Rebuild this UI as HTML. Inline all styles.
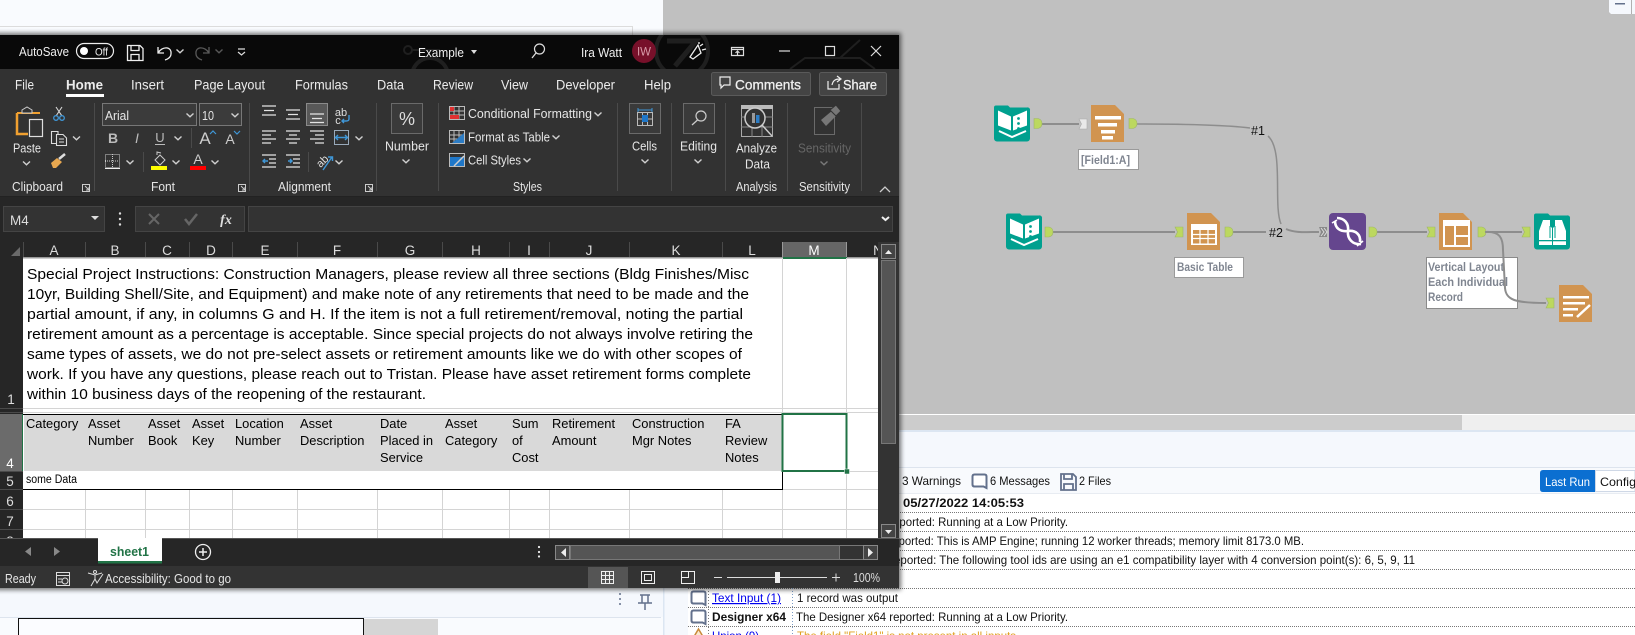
<!DOCTYPE html>
<html lang="en"><head><meta charset="utf-8"><title>Excel and Designer</title>
<style>
html,body{margin:0;padding:0;background:#fff;width:1635px;height:635px;overflow:hidden}
svg{display:block}
text{font-family:"Liberation Sans",Arial,sans-serif;white-space:pre}
.t{font-size:14px;fill:#ececec}
.r{font-size:13px;fill:#e6e6e6}
.m{text-anchor:middle}
.c{font-size:14.67px;fill:#000}
.h{font-size:12.9px;fill:#000}
.cl{font-size:13.5px;fill:#ddd;text-anchor:middle}
.rn{font-size:13.5px;fill:#ddd;text-anchor:middle}
.lg{font-size:12px;fill:#111}
.cm{font-size:11.5px;font-weight:bold;fill:#7f8590}
.ic{fill:none;stroke:#ddd;stroke-width:1.2}
.bl{fill:none;stroke:#3f97d8;stroke-width:1.4}
.wl{fill:none;stroke:#e4e4e4;stroke-width:1.2}
.ws{fill:#fff}
</style></head><body>
<svg xmlns="http://www.w3.org/2000/svg" width="1635" height="635" viewBox="0 0 1635 635">
<defs>
<clipPath id="tb"><rect x="0" y="35" width="899" height="34"/></clipPath>
<polyline id="ch" points="-3.5,-1.5 0,1.8 3.5,-1.5" fill="none" stroke="#d0d0d0" stroke-width="1.4"/>
<filter id="b" x="-5%" y="-5%" width="110%" height="110%"><feGaussianBlur stdDeviation="2.5"/></filter>
<path id="teal" d="M2 0H14L16 2H33A2.500 2.500 0 0 1 36 5V33A3 3 0 0 1 33 36H3A3 3 0 0 1 0 33V2A2 2 0 0 1 2 0Z" fill="#00a08f"/>
<g id="book"><use href="#teal"/>
<path d="M4 5L17 11V25L4 20Z M19 11L33 5V20L19 25Z" fill="#fff"/>
<circle cx="24.500" cy="13" r="1.400" fill="#00a08f"/><circle cx="24.500" cy="18" r="1.400" fill="#00a08f"/><circle cx="24.500" cy="23" r="1.400" fill="#00a08f"/>
<path d="M5 25.500L18 31.500L32 25.500" fill="none" stroke="#fff" stroke-width="2"/></g>
<path id="or" d="M0 0H24L33 9V37H0Z" fill="#d19450"/>
<path id="out" d="M0 0H4Q8 1 8 5T4 10H0Z" fill="#bcd85f" stroke="#9fb56a" stroke-width=".6"/>
<path id="inp" d="M0 0H8V10H0L2.500 5Z" fill="#bcd85f" stroke="#9fb56a" stroke-width=".6"/>
<path id="msg" d="M3.500 1.500H13.500Q15.500 1.500 15.500 3.500V15L12.500 13.500H3.500Q1.500 13.500 1.500 11.500V3.500Q1.500 1.500 3.500 1.500Z" fill="#fff" stroke="#63718c" stroke-width="2"/>
</defs>

<!-- background -->
<rect width="1635" height="635" fill="#fff"/>
<rect width="663" height="635" fill="#f9fbfe"/>
<path d="M0 26.500H632.500V40" fill="none" stroke="#dcdcdc"/>
<rect x="663" width="972" height="414" fill="#c0c0c0"/>
<path d="M1609 0H1631V14H1611L1609 12Z" fill="#f5f8fd"/>
<rect x="1615" y="3" width="10" height="1.500" fill="#63718c"/>
<rect x="1631" width="1" height="14" fill="#b0b0b0"/><rect x="1632" width="3" height="14" fill="#f5f8fd"/>

<!-- canvas scrollbar and results panel -->
<rect x="663" y="415" width="799" height="15" fill="#cccccc"/>
<rect x="1462" y="415" width="173" height="15" fill="#efefef"/>
<rect x="663" y="430" width="972" height="2" fill="#dce6f2"/>
<rect x="663" y="432" width="972" height="35" fill="#f5f8fd"/>
<rect x="663" y="467" width="972" height="1" fill="#dde4ee"/>
<rect x="663" y="468" width="972" height="25" fill="#f8fafd"/>
<rect x="663" y="493" width="972" height="1" fill="#e8ecf2"/>
<rect x="663" y="494" width="25" height="141" fill="#f5f8fd"/>
<rect x="663" y="430" width="1.500" height="205" fill="#dce6f2"/>

<text class="lg" x="902" y="485" textLength="59" lengthAdjust="spacingAndGlyphs">3 Warnings</text>
<use href="#msg" x="971" y="473"/>
<text class="lg" x="990" y="485" textLength="60" lengthAdjust="spacingAndGlyphs">6 Messages</text>
<g fill="none" stroke="#63718c" stroke-width="1.800"><path d="M1061 474H1073L1076 477V490H1061Z"/><path d="M1064 474V479H1072V474M1064 490V484H1073V490"/></g>
<text class="lg" x="1079" y="485" textLength="32" lengthAdjust="spacingAndGlyphs">2 Files</text>
<path d="M1543 470H1595V492H1543Q1540 492 1540 489V473Q1540 470 1543 470Z" fill="#0b6fd1"/>
<text class="lg" x="1545" y="486" textLength="45" lengthAdjust="spacingAndGlyphs" style="fill:#fff">Last Run</text>
<path d="M1595.500 470.500H1635V491.500H1595.500Z" fill="#fff" stroke="#cfd8e6"/>
<text class="lg" x="1600" y="486" textLength="36" lengthAdjust="spacingAndGlyphs">Config</text>

<g stroke="#777" stroke-dasharray="1 1" stroke-width="1">
<path d="M688 512.500H1635M688 531.500H1635M688 550.500H1635M688 569.500H1635M688 588.500H1635M688 607.500H1635M688 626.500H1635"/></g>
<path d="M792.500 588V635" stroke="#7a9cc6" stroke-dasharray="1 2"/>
<path d="M708.500 588V635" stroke="#777" stroke-dasharray="1 2"/>
<text class="lg" x="903" y="507" textLength="121" lengthAdjust="spacingAndGlyphs" style="font-weight:bold">05/27/2022 14:05:53</text>
<text class="lg" x="796" y="526" textLength="272" lengthAdjust="spacingAndGlyphs">The Designer x64 reported: Running at a Low Priority.</text>
<text class="lg" x="796" y="545" textLength="508" lengthAdjust="spacingAndGlyphs">The Designer x64 reported: This is AMP Engine; running 12 worker threads; memory limit 8173.0 MB.</text>
<text class="lg" x="796" y="564" textLength="619" lengthAdjust="spacingAndGlyphs">The Designer x64 reported: The following tool ids are using an e1 compatibility layer with 4 conversion point(s): 6, 5, 9, 11</text>
<use href="#msg" x="690" y="590"/>
<text class="lg" x="712" y="602" textLength="69" lengthAdjust="spacingAndGlyphs" style="fill:#0000ee;text-decoration:underline">Text Input (1)</text>
<text class="lg" x="797" y="602" textLength="101" lengthAdjust="spacingAndGlyphs">1 record was output</text>
<use href="#msg" x="690" y="609"/>
<text class="lg" x="712" y="621" textLength="74" lengthAdjust="spacingAndGlyphs" style="font-weight:bold">Designer x64</text>
<text class="lg" x="796" y="621" textLength="272" lengthAdjust="spacingAndGlyphs">The Designer x64 reported: Running at a Low Priority.</text>
<path d="M698.500 629L705 640H692Z" fill="#fbe9cf" stroke="#c98a3a" stroke-width="1.500"/>
<text class="lg" x="712" y="640" textLength="47" lengthAdjust="spacingAndGlyphs" style="fill:#0000ee;text-decoration:underline">Union (9)</text>
<text class="lg" x="797" y="640" textLength="219" lengthAdjust="spacingAndGlyphs" style="fill:#e0a020">The field "Field1" is not present in all inputs</text>

<!-- left lower -->
<rect y="590" width="663" height="27" fill="#f5f8fd"/>
<rect y="617" width="661" height="1" fill="#dde4ee"/>
<rect x="18.500" y="618.500" width="345" height="20" fill="#fbfcff" stroke="#111"/>
<rect x="364" y="619" width="74" height="16" fill="#d5d5d5"/>
<circle cx="620" cy="594" r="1" fill="#63718c"/><circle cx="620" cy="599" r="1" fill="#63718c"/><circle cx="620" cy="604" r="1" fill="#63718c"/>
<path d="M640 595H650M642 595V603H648V595M638 603H652M645 603V610" fill="none" stroke="#63718c" stroke-width="1.500"/>

<!-- workflow connections -->
<g fill="none" stroke="#8d8d8d" stroke-width="2">
<path d="M1041 124H1079"/>
<path d="M1137 124C1180 124 1225 125 1250 128" stroke-width="1.500"/>
<path d="M1268 136C1284 150 1273 205 1281 224" stroke-width="1.500"/>
<path d="M1052 232H1175"/><path d="M1232 232H1266"/>
<path d="M1286 229C1295 233 1305 232 1319 232"/>
<path d="M1377 232H1427"/><path d="M1485 232H1522"/>
</g>
<text x="1258" y="135" text-anchor="middle" style="font-size:12.500px;fill:#111">#1</text>
<text x="1276" y="237" text-anchor="middle" style="font-size:12.500px;fill:#111">#2</text>

<use href="#book" x="994" y="105.500"/>
<use href="#out" x="1034" y="118.500"/>
<path d="M1079 119H1087V129H1079L1081.500 124Z" fill="#e9e9e9" stroke="#aaa" stroke-width=".6"/>
<use href="#or" x="1091" y="105"/>
<g class="ws"><rect x="1095" y="116" width="26" height="3.500"/><rect x="1098" y="123" width="19" height="3.500"/><rect x="1101" y="130" width="14" height="3.500"/><rect x="1102" y="136" width="11" height="3.500"/></g>
<use href="#out" x="1129" y="118.500"/>
<rect x="1078.500" y="149.500" width="60" height="20" fill="#fff" stroke="#9a9a9a"/>
<text class="cm" x="1081" y="164" textLength="49" lengthAdjust="spacingAndGlyphs">[Field1:A]</text>

<use href="#book" x="1006" y="213.500"/>
<use href="#out" x="1045" y="227"/>
<use href="#inp" x="1175" y="227"/>
<use href="#or" x="1187" y="213"/>
<rect x="1191" y="224" width="26" height="21" fill="#fff"/>
<rect x="1193" y="230" width="22" height="13.500" fill="#d19450"/>
<path d="M1193 234.500H1215M1193 238.500H1215M1200 230V244M1208 230V244" stroke="#fff" stroke-width="1.200"/>
<use href="#out" x="1225" y="227"/>
<rect x="1174.500" y="257.500" width="69" height="20" fill="#fff" stroke="#9a9a9a"/>
<text class="cm" x="1177" y="271" textLength="56" lengthAdjust="spacingAndGlyphs">Basic Table</text>

<path d="M1319 227H1327V237H1319L1321 232Z" fill="#888"/>
<path d="M1321 228L1324 232L1321 236M1324 228L1327 232L1324 236" fill="none" stroke="#ddd"/>
<rect x="1329" y="213" width="37" height="37" rx="4" fill="#65468e"/>
<g fill="none" stroke="#fff" stroke-width="2.600" transform="translate(1329 213)">
<path d="M8 5C15 5 20 10 19 18C18 26 24 32 32 31"/>
<path d="M6 8C6 15 11 19 19 18C27 17 32 22 31 29"/>
<path d="M3 10L8 7M28 33L34 28" stroke-width="1.600"/>
</g>
<g fill="#65468e"><circle cx="1341" cy="224" r="1.100"/><circle cx="1344" cy="227" r="1.100"/><circle cx="1353" cy="236" r="1.100"/><circle cx="1356" cy="239" r="1.100"/></g>
<use href="#out" x="1369" y="227"/>
<use href="#inp" x="1427" y="227"/>
<use href="#or" x="1439" y="213"/>
<rect x="1443" y="220" width="27" height="27" fill="#fff"/>
<rect x="1445" y="226" width="9" height="19" fill="#d19450"/><rect x="1456" y="226" width="12" height="9" fill="#d19450"/><rect x="1456" y="237" width="12" height="8" fill="#d19450"/>
<use href="#out" x="1478" y="227"/>
<use href="#inp" x="1522" y="227"/>
<use href="#teal" x="1534" y="213.500"/>
<g transform="translate(1534 213)" fill="#fff">
<path d="M9 7H16V13L18 15V32H5V18Z"/><path d="M28 7H21V13L19 15V32H32V18Z"/>
<rect x="5" y="27" width="13" height="1.300" fill="#00a08f"/><rect x="19" y="27" width="13" height="1.300" fill="#00a08f"/>
<rect x="15.500" y="13" width="1" height="12" fill="#00a08f"/><rect x="20.500" y="13" width="1" height="12" fill="#00a08f"/>
</g>

<rect x="1426.500" y="257.500" width="91" height="51" fill="#fff" stroke="#8a8a8a"/>
<text class="cm" x="1428" y="271" textLength="76" lengthAdjust="spacingAndGlyphs">Vertical Layout</text>
<text class="cm" x="1428" y="286" textLength="80" lengthAdjust="spacingAndGlyphs">Each Individual</text>
<text class="cm" x="1428" y="301" textLength="35" lengthAdjust="spacingAndGlyphs">Record</text>
<path d="M1485 232C1500 231 1503 238 1503 250L1505 288C1506 300 1515 303 1546 303" fill="none" stroke="#8d8d8d" stroke-width="2"/>
<use href="#inp" x="1546" y="298"/>
<use href="#or" x="1559" y="285"/>
<g fill="#fff"><rect x="1563" y="296" width="26" height="2.500"/><rect x="1563" y="302" width="22" height="2.500"/><rect x="1563" y="308" width="15" height="2.500"/><rect x="1563" y="314" width="10" height="2.500"/></g>
<path d="M1577 317L1590 305" stroke="#fff" stroke-width="2.500"/>

<!-- EXCEL WINDOW -->
<rect x="-5" y="33" width="906" height="557" fill="#000" opacity=".55" filter="url(#b)"/>
<rect y="35" width="899" height="553" fill="#262626"/>
<rect y="35" width="899" height="34" fill="#090909"/>
<g fill="none" stroke="#1f1f1f" stroke-width="2" clip-path="url(#tb)">
<circle cx="682" cy="51" r="26" stroke-width="4"/><path d="M667 41H696L675 66" stroke-width="5"/>
<circle cx="408" cy="50" r="4"/><circle cx="430" cy="76" r="18" stroke-width="4"/><path d="M412 50H440M790 69L805 58H860L875 69M840 58L860 40"/>
</g>
<!-- title -->
<text x="19" y="56" textLength="50" lengthAdjust="spacingAndGlyphs" style="font-size:13px;fill:#f0f0f0">AutoSave</text>
<rect x="76.500" y="43.500" width="37" height="15" rx="7.500" fill="#090909" stroke="#eee" stroke-width="1.200"/>
<circle cx="84" cy="51" r="4" fill="#fff"/>
<text x="95" y="55.500" textLength="13" lengthAdjust="spacingAndGlyphs" style="font-size:11px;fill:#eee">Off</text>
<g fill="none" stroke="#eee" stroke-width="1.300"><path d="M127.500 45.500H140L143 48.500V60.500H127.500Z"/><path d="M131 45.500V50.500H139V45.500M131 60.500V54.500H139V60.500"/>
<path d="M158 47V53H164M158 53C162 46 172 46 171 54C171 57 168 59 165 60"/></g>
<use href="#ch" x="180" y="51"/>
<g fill="none" stroke="#5a5a5a" stroke-width="1.300"><path d="M209 47V53H203M209 53C205 46 195 46 196 54C196 57 199 59 202 60"/></g>
<use href="#ch" x="219" y="51" opacity=".4"/>
<path d="M238 49H245M238 52L241.500 55L245 52" fill="none" stroke="#ddd" stroke-width="1.200"/>
<text x="418" y="57" textLength="46" lengthAdjust="spacingAndGlyphs" style="font-size:13px;fill:#f0f0f0">Example</text>
<path d="M471 50H477L474 54Z" fill="#ddd"/>
<circle cx="539.500" cy="49" r="5" fill="none" stroke="#ddd" stroke-width="1.200"/><path d="M536 53L532 58" stroke="#ddd" stroke-width="1.300"/>
<text x="581" y="57" textLength="41" lengthAdjust="spacingAndGlyphs" style="font-size:13px;fill:#f0f0f0">Ira Watt</text>
<circle cx="644" cy="51" r="12" fill="#77102a"/>
<text x="644" y="55.500" text-anchor="middle" style="font-size:11.500px;fill:#d89aa8">IW</text>
<path d="M690 57L698 45L701 53L693 59ZM700 46L703 44M702 50L706 49M699 42V44" fill="none" stroke="#eee" stroke-width="1.300"/>
<g fill="none" stroke="#ddd" stroke-width="1.200"><path d="M731.500 47.500H743.500V55.500H731.500ZM731.500 49.500H743.500M737.500 55V51M735.500 53L737.500 51L739.500 53"/>
<path d="M779 51H790"/><rect x="825.500" y="46.500" width="9" height="9"/><path d="M871 46L881 56M881 46L871 56"/></g>

<!-- tabs -->
<rect y="69" width="899" height="127" fill="#323232"/>
<g class="t">
<text x="15" y="89.500" textLength="19" lengthAdjust="spacingAndGlyphs">File</text>
<text x="66" y="89.500" textLength="37" lengthAdjust="spacingAndGlyphs" style="font-weight:bold">Home</text>
<text x="131" y="89.500" textLength="33" lengthAdjust="spacingAndGlyphs">Insert</text>
<text x="194" y="89.500" textLength="71" lengthAdjust="spacingAndGlyphs">Page Layout</text>
<text x="295" y="89.500" textLength="53" lengthAdjust="spacingAndGlyphs">Formulas</text>
<text x="377" y="89.500" textLength="27" lengthAdjust="spacingAndGlyphs">Data</text>
<text x="433" y="89.500" textLength="40" lengthAdjust="spacingAndGlyphs">Review</text>
<text x="501" y="89.500" textLength="27" lengthAdjust="spacingAndGlyphs">View</text>
<text x="556" y="89.500" textLength="59" lengthAdjust="spacingAndGlyphs">Developer</text>
<text x="644" y="89.500" textLength="27" lengthAdjust="spacingAndGlyphs">Help</text>
</g>
<rect x="66" y="94" width="38" height="3" fill="#fff"/>
<rect x="711.500" y="72.500" width="99" height="23" rx="2" fill="#444" stroke="#5a5a5a"/>
<path d="M720 77H730V85H724L721 88V85H720Z" fill="none" stroke="#eee" stroke-width="1.200"/>
<text x="735" y="89.500" textLength="66" lengthAdjust="spacingAndGlyphs" style="font-size:14px;fill:#f0f0f0;stroke:#f0f0f0;stroke-width:.3">Comments</text>
<rect x="819.500" y="72.500" width="67" height="23" rx="2" fill="#444" stroke="#5a5a5a"/>
<path d="M828 81V89H839V84M832 85C833 80 836 79 840 79M837 76L841 79L837 82" fill="none" stroke="#eee" stroke-width="1.200"/>
<text x="843" y="89.500" textLength="34" lengthAdjust="spacingAndGlyphs" style="font-size:14px;fill:#f0f0f0;stroke:#f0f0f0;stroke-width:.3">Share</text>

<!-- ribbon separators -->
<path d="M94.500 103V191M249.500 103V191M376.500 103V191M438.500 103V191M617.500 103V191M671.500 103V191M725.500 103V191M787.500 103V191M861.500 103V191" stroke="#4a4a4a"/>
<rect y="196" width="899" height="1" fill="#222"/>
<!-- group labels -->
<g class="r">
<text x="12" y="191" textLength="51" lengthAdjust="spacingAndGlyphs">Clipboard</text>
<text x="151" y="191" textLength="24" lengthAdjust="spacingAndGlyphs">Font</text>
<text x="278" y="191" textLength="53" lengthAdjust="spacingAndGlyphs">Alignment</text>
<text x="513" y="191" textLength="29" lengthAdjust="spacingAndGlyphs">Styles</text>
<text x="736" y="191" textLength="41" lengthAdjust="spacingAndGlyphs">Analysis</text>
<text x="799" y="191" textLength="51" lengthAdjust="spacingAndGlyphs">Sensitivity</text>
</g>
<g fill="none" stroke="#ccc"><path d="M82.500 191.500V184.500H89.500V191.500ZM85 186L89 190M86 190H89V187"/><path d="M238.500 191.500V184.500H245.500V191.500ZM241 186L245 190M242 190H245V187"/><path d="M365.500 191.500V184.500H372.500V191.500ZM368 186L372 190M369 190H372V187"/></g>
<polyline points="880,192 885,187 890,192" fill="none" stroke="#ccc" stroke-width="1.300"/>

<!-- clipboard -->
<path d="M17 113V134H28" fill="none" stroke="#f0a030" stroke-width="2.500"/><path d="M17 113H40" fill="none" stroke="#f0a030" stroke-width="2"/>
<path d="M22 113V110L27 107L32 110V113Z" fill="#323232" stroke="#ccc"/>
<rect x="29.500" y="119.500" width="13" height="17" fill="#333" stroke="#ddd" stroke-width="1.200"/>
<text class="r" x="13" y="152.500" textLength="28" lengthAdjust="spacingAndGlyphs">Paste</text><use href="#ch" x="26.500" y="163"/>
<g fill="none" stroke="#d8d8d8" stroke-width="1.100"><path d="M56 107L62 116M62 107L56 116"/></g><circle cx="56" cy="118" r="2.300" fill="none" stroke="#3f97d8" stroke-width="1.300"/><circle cx="62" cy="118" r="2.300" fill="none" stroke="#3f97d8" stroke-width="1.300"/>
<g fill="none" stroke="#ddd" stroke-width="1.100"><path d="M51.500 131.500H58V143.500H51.500Z"/><path d="M56.500 134.500H63L66.500 138V145.500H56.500Z" fill="#323232"/><path d="M59 139H64M59 142H64"/></g>
<use href="#ch" x="76.500" y="138"/>
<path d="M51 163L57 158L62 162L56 168H53Z" fill="#e8a850"/><path d="M59 159L65 154" stroke="#ddd" stroke-width="2.500"/>

<!-- font -->
<rect x="102.500" y="103.500" width="94" height="22" fill="#3b3b3b" stroke="#777"/>
<text class="r" x="105" y="120" textLength="24" lengthAdjust="spacingAndGlyphs">Arial</text><use href="#ch" x="190" y="115"/>
<rect x="199.500" y="103.500" width="42" height="22" fill="#3b3b3b" stroke="#777"/>
<text class="r" x="202" y="120" textLength="12" lengthAdjust="spacingAndGlyphs">10</text><use href="#ch" x="235" y="115"/>
<text x="113" y="143" text-anchor="middle" style="font-size:14px;font-weight:bold;fill:#bbb">B</text>
<text x="137" y="143" text-anchor="middle" style="font-size:14px;font-style:italic;fill:#bbb">I</text>
<text x="160" y="142" text-anchor="middle" style="font-size:13px;fill:#bbb">U</text><rect x="155" y="144" width="10" height="1" fill="#bbb"/>
<use href="#ch" x="178" y="138"/><path d="M191.500 128V148" stroke="#4a4a4a"/>
<text x="205" y="144" text-anchor="middle" style="font-size:17px;fill:#ccc">A</text><polyline points="210,134 213,131 216,134" fill="none" stroke="#3f97d8" stroke-width="1.200"/>
<text x="230" y="144" text-anchor="middle" style="font-size:14px;fill:#ccc">A</text><polyline points="234,131 237,134 240,131" fill="none" stroke="#3f97d8" stroke-width="1.200"/>
<g fill="none" stroke="#ccc" stroke-dasharray="1 1"><rect x="105.500" y="154.500" width="14" height="13"/><path d="M105 161H120M112.500 154V168"/></g><rect x="105" y="168" width="15" height="1" fill="#eee"/>
<use href="#ch" x="130" y="162"/><path d="M143.500 152V172" stroke="#4a4a4a"/>
<path d="M155 160L160 155L165 160L160 165Z" fill="none" stroke="#ccc"/><path d="M157 155V152L161 153" fill="none" stroke="#ccc"/>
<rect x="151" y="166" width="16" height="4" fill="#ffff00"/><use href="#ch" x="176" y="162"/>
<text x="198" y="164" text-anchor="middle" style="font-size:14px;fill:#ccc">A</text><rect x="190" y="166" width="16" height="4" fill="#f00"/><use href="#ch" x="215" y="162"/>

<!-- alignment -->
<rect x="306.500" y="103.500" width="21" height="22" fill="#585858" stroke="#8a8a8a"/>
<path class="wl" d="M262 106H276M264 110.500H274M262 115H276M286 110H300M288 114.500H298M286 119H300M310 114H324M312 118.500H322M310 122.500H324"/>
<text x="341" y="116" text-anchor="middle" style="font-size:11px;fill:#ddd">ab</text>
<text x="338" y="124" text-anchor="middle" style="font-size:11px;fill:#ddd">c</text>
<path class="bl" d="M349 115V119Q349 121 346 121H342M344 119L342 121L344 123"/>
<path class="wl" d="M262 131H276M262 135H271M262 139H276M262 143H271M286 131H300M289 135H297M286 139H300M289 143H297M310 131H324M315 135H324M310 139H324M315 143H324"/>
<rect x="334.500" y="130.500" width="14" height="14" fill="none" stroke="#9ab"/><path class="bl" d="M335 137.500H348M338 135L335.500 137.500L338 140M345 135L347.500 137.500L345 140"/>
<use href="#ch" x="359" y="138"/>
<path class="wl" d="M262 155H276M269 159H276M269 163H276M262 167H276M286 155H300M293 159H300M293 163H300M286 167H300"/>
<path class="bl" d="M263 161H268M265 159L263 161L265 163M288 161H292M290 159L292 161L290 163"/>
<path d="M308.500 152V172" stroke="#4a4a4a"/>
<text x="322" y="165" text-anchor="middle" transform="rotate(-45 322 161)" style="font-size:11px;fill:#ddd">ab</text>
<path class="bl" d="M323 170L332 157M328 157H332.500V161"/><use href="#ch" x="339" y="162"/>

<!-- number -->
<rect x="391.500" y="103.500" width="31" height="30" fill="#3a3a3a" stroke="#6a6a6a"/>
<text x="407" y="125" text-anchor="middle" style="font-size:18px;fill:#ddd">%</text>
<text class="r" x="385" y="150.500" textLength="44" lengthAdjust="spacingAndGlyphs">Number</text><use href="#ch" x="406" y="161"/>

<!-- styles -->
<g fill="none" stroke="#bbb"><rect x="449.500" y="106.500" width="15" height="13"/><path d="M449 111H465M449 115H465M454 106V120M459 106V120"/></g>
<path d="M450 107H454V111H450ZM450 115H459V119H450Z" fill="#e03030"/>
<text class="r" x="468" y="118" textLength="124" lengthAdjust="spacingAndGlyphs">Conditional Formatting</text><use href="#ch" x="598" y="114"/>
<g fill="none" stroke="#bbb"><rect x="449.500" y="130.500" width="15" height="13"/><path d="M449 135H465M449 139H465M454 130V144M459 130V144"/></g>
<path d="M452 143L464 133V143Z" fill="#2c7cc4"/>
<text class="r" x="468" y="141.500" textLength="82" lengthAdjust="spacingAndGlyphs">Format as Table</text><use href="#ch" x="556" y="137"/>
<g fill="none" stroke="#bbb"><rect x="449.500" y="153.500" width="15" height="13"/></g><rect x="450" y="157" width="14" height="9" fill="#1f77c8"/>
<path d="M454 166L464 156" stroke="#ccc" stroke-width="1.500"/>
<text class="r" x="468" y="164.500" textLength="53" lengthAdjust="spacingAndGlyphs">Cell Styles</text><use href="#ch" x="527" y="160"/>

<!-- cells -->
<rect x="629.500" y="103.500" width="31" height="30" fill="#3a3a3a" stroke="#6a6a6a"/>
<g fill="none" stroke="#bbb"><rect x="637.500" y="112.500" width="15" height="13"/><path d="M637 119H653M642.500 112V126M647.500 112V126"/></g>
<rect x="642" y="115" width="6" height="7" fill="#1f77c8"/><path d="M638 110H652M638 108V112M652 108V112" stroke="#3f97d8" fill="none"/>
<text class="r" x="632" y="150.500" textLength="25" lengthAdjust="spacingAndGlyphs">Cells</text><use href="#ch" x="645" y="161"/>
<!-- editing -->
<rect x="683.500" y="103.500" width="31" height="30" fill="#3a3a3a" stroke="#6a6a6a"/>
<circle cx="701" cy="116" r="5" fill="none" stroke="#ccc" stroke-width="1.200"/><path d="M697.500 120L692 125" stroke="#ccc" stroke-width="1.300"/>
<text class="r" x="680" y="150.500" textLength="37" lengthAdjust="spacingAndGlyphs">Editing</text><use href="#ch" x="698" y="161"/>
<!-- analyze -->
<rect x="741.500" y="105.500" width="31" height="31" fill="none" stroke="#aaa"/><rect x="741" y="105" width="32" height="4" fill="#bbb"/>
<path d="M741 117H773M741 127H773M752 109V137M762 109V137" stroke="#888"/>
<circle cx="755" cy="118" r="10" fill="#323232" stroke="#ccc" stroke-width="1.500"/>
<rect x="752" y="113" width="3" height="10" fill="#999"/><rect x="756" y="115" width="3.500" height="8" fill="#2c7cc4"/>
<path d="M762 125L772 136" stroke="#ccc" stroke-width="1.500"/>
<text class="r" x="736" y="152.500" textLength="41" lengthAdjust="spacingAndGlyphs">Analyze</text><text class="r" x="745" y="168.500" textLength="25" lengthAdjust="spacingAndGlyphs">Data</text>
<!-- sensitivity -->
<rect x="814.500" y="107.500" width="20" height="27" fill="none" stroke="#6a6a6a"/>
<path d="M821 120L833 110L837 115L826 126Z" fill="#777"/><path d="M830 110L836 105L841 111L836 116Z" fill="#777" stroke="#323232"/>
<text class="r" x="798" y="152.500" textLength="53" lengthAdjust="spacingAndGlyphs" style="fill:#666">Sensitivity</text><use href="#ch" x="824" y="163" opacity=".45"/>

<!-- formula bar -->
<rect x="3.500" y="206.500" width="101" height="25" fill="#333" stroke="#444"/>
<text x="10" y="225" style="font-size:13.500px;fill:#ddd">M4</text><path d="M91 216H99L95 220Z" fill="#ddd"/>
<circle cx="120" cy="213.500" r="1.200" fill="#ddd"/><circle cx="120" cy="219" r="1.200" fill="#ddd"/><circle cx="120" cy="224.500" r="1.200" fill="#ddd"/>
<rect x="135.500" y="206.500" width="109" height="25" fill="#333" stroke="#444"/>
<path d="M149 214L159 224M159 214L149 224" stroke="#666" stroke-width="2"/><path d="M185 219L189 224L197 214" fill="none" stroke="#666" stroke-width="2.500"/>
<text x="226" y="224" text-anchor="middle" style="font-family:'Liberation Serif',serif;font-style:italic;font-weight:bold;font-size:14px;fill:#ddd">fx</text>
<rect x="248.500" y="206.500" width="644" height="25" fill="#333" stroke="#444"/>
<polyline points="882,217 885.500,220 889,217" fill="none" stroke="#eee" stroke-width="2"/>

<!-- column headers -->
<rect y="242" width="878" height="16" fill="#262626"/>
<path d="M11 256H20V247Z" fill="#6a6a6a"/>
<path d="M23.500 242V258M85.500 242V258M145.500 242V258M189.500 242V258M232.500 242V258M297.500 242V258M377.500 242V258M442.500 242V258M509.500 242V258M549.500 242V258M629.500 242V258M722.500 242V258" stroke="#4a4a4a"/>
<rect x="783" y="242" width="64" height="16" fill="#666"/>
<path d="M782.500 242V258M846.500 242V258" stroke="#999"/>
<g class="cl"><text x="54" y="255">A</text><text x="115" y="255">B</text><text x="167" y="255">C</text><text x="211" y="255">D</text><text x="265" y="255">E</text><text x="337" y="255">F</text><text x="410" y="255">G</text><text x="476" y="255">H</text><text x="529" y="255">I</text><text x="589" y="255">J</text><text x="676" y="255">K</text><text x="752" y="255">L</text><text x="814" y="255" style="fill:#fff">M</text><text x="878" y="255">N</text></g>
<rect x="878" y="242" width="3" height="16" fill="#262626"/>

<!-- row header -->
<rect y="258" width="23" height="280" fill="#262626"/>
<rect y="414" width="23" height="57" fill="#6b6b6b"/>
<rect x="22" y="414" width="1.500" height="57" fill="#217346"/>
<path d="M0 408.500H23M0 412.500H23M0 471.500H23M0 489.500H23M0 509.500H23M0 529.500H23" stroke="#4a4a4a"/>
<g class="rn"><text x="11" y="404">1</text><text x="10" y="468" style="fill:#fff">4</text><text x="10" y="486">5</text><text x="10" y="506">6</text><text x="10" y="526">7</text><text x="10" y="546">8</text></g>

<!-- sheet -->
<rect x="23" y="258" width="855" height="280" fill="#fff"/>
<rect x="23" y="257" width="760" height="1.500" fill="#999"/><rect x="847" y="257" width="31" height="1.500" fill="#999"/>
<rect x="783" y="257" width="64" height="2" fill="#217346"/>
<path d="M23 408.500H878M23 412.500H878M847 471.500H878M783 489.500H878M23 509.500H878M23 529.500H878" stroke="#d4d4d4"/>
<path d="M782.500 258V414M846.500 258V538M85.500 489V538M145.500 489V538M189.500 489V538M232.500 489V538M297.500 489V538M377.500 489V538M442.500 489V538M509.500 489V538M549.500 489V538M629.500 489V538M722.500 489V538M782.500 489V538" stroke="#d4d4d4"/>
<g class="c">
<text x="27" y="279" textLength="722" lengthAdjust="spacingAndGlyphs">Special Project Instructions: Construction Managers, please review all three sections (Bldg Finishes/Misc</text>
<text x="27" y="299" textLength="722" lengthAdjust="spacingAndGlyphs">10yr, Building Shell/Site, and Equipment) and make note of any retirements that need to be made and the</text>
<text x="27" y="319" textLength="716" lengthAdjust="spacingAndGlyphs">partial amount, if any, in columns G and H. If the item is not a full retirement/removal, noting the partial</text>
<text x="27" y="339" textLength="726" lengthAdjust="spacingAndGlyphs">retirement amount as a percentage is acceptable. Since special projects do not always involve retiring the</text>
<text x="27" y="359" textLength="715" lengthAdjust="spacingAndGlyphs">same types of assets, we do not pre-select assets or retirement amounts like we do with other scopes of</text>
<text x="27" y="379" textLength="724" lengthAdjust="spacingAndGlyphs">work. If you have any questions, please reach out to Tristan. Please have asset retirement forms complete</text>
<text x="27" y="399" textLength="399" lengthAdjust="spacingAndGlyphs">within 10 business days of the reopening of the restaurant.</text>
</g>
<rect x="24" y="414" width="758" height="57" fill="#d9d9d9"/>
<path d="M23 414.500H782M23 489.500H782.500V471" fill="none" stroke="#000"/>
<g class="h">
<text x="26" y="428">Category</text>
<text x="88" y="428">Asset</text><text x="88" y="445">Number</text>
<text x="148" y="428">Asset</text><text x="148" y="445">Book</text>
<text x="192" y="428">Asset</text><text x="192" y="445">Key</text>
<text x="235" y="428">Location</text><text x="235" y="445">Number</text>
<text x="300" y="428">Asset</text><text x="300" y="445">Description</text>
<text x="380" y="428">Date</text><text x="380" y="445">Placed in</text><text x="380" y="462">Service</text>
<text x="445" y="428">Asset</text><text x="445" y="445">Category</text>
<text x="512" y="428">Sum</text><text x="512" y="445">of</text><text x="512" y="462">Cost</text>
<text x="552" y="428">Retirement</text><text x="552" y="445">Amount</text>
<text x="632" y="428">Construction</text><text x="632" y="445">Mgr Notes</text>
<text x="725" y="428">FA</text><text x="725" y="445">Review</text><text x="725" y="462">Notes</text>
</g>
<text x="26" y="483" textLength="51" lengthAdjust="spacingAndGlyphs" style="font-size:11.500px;fill:#000">some Data</text>
<rect x="782.500" y="414" width="64" height="57" fill="#fff" stroke="#217346" stroke-width="2"/>
<rect x="844.500" y="469" width="5" height="5" fill="#217346" stroke="#fff" stroke-width=".5"/>

<!-- vertical scrollbar -->
<rect x="878" y="242" width="21" height="296" fill="#333"/>
<rect x="881.500" y="244.500" width="14" height="14" fill="#444" stroke="#888"/><path d="M885 254H892L888.500 250Z" fill="#eee"/>
<rect x="881.500" y="260.500" width="14" height="183" fill="#555" stroke="#777"/>
<rect x="881.500" y="524.500" width="14" height="13" fill="#444" stroke="#888"/><path d="M885 530H892L888.500 534Z" fill="#eee"/>

<!-- sheet tabs -->
<rect y="538" width="899" height="28" fill="#262626"/>
<rect y="538" width="899" height="1" fill="#555"/>
<path d="M31 547V556L25 551.500Z" fill="#888"/><path d="M54 547V556L60 551.500Z" fill="#888"/>
<rect x="98" y="538" width="64" height="24" fill="#fff"/><rect x="98" y="561" width="64" height="2.500" fill="#217346"/>
<text x="110" y="556" textLength="39" lengthAdjust="spacingAndGlyphs" style="font-size:13px;font-weight:bold;fill:#217346">sheet1</text>
<circle cx="203" cy="552" r="7.500" fill="none" stroke="#eee" stroke-width="1.300"/><path d="M199 552H207M203 548V556" stroke="#eee" stroke-width="1.500"/>
<circle cx="539" cy="547" r="1.100" fill="#eee"/><circle cx="539" cy="552" r="1.100" fill="#eee"/><circle cx="539" cy="556.500" r="1.100" fill="#eee"/>
<rect x="555.500" y="545.500" width="322" height="14" fill="#333" stroke="#777"/>
<rect x="555.500" y="545.500" width="14" height="14" fill="#444" stroke="#888"/><path d="M566 548V557L561 552.500Z" fill="#eee"/>
<rect x="570.500" y="545.500" width="269" height="14" fill="#555" stroke="#777"/>
<rect x="863.500" y="545.500" width="14" height="14" fill="#444" stroke="#888"/><path d="M868 548V557L873 552.500Z" fill="#eee"/>

<!-- status bar -->
<rect y="566" width="899" height="22" fill="#333"/>
<text x="5" y="583" textLength="31" lengthAdjust="spacingAndGlyphs" style="font-size:12.500px;fill:#e6e6e6">Ready</text>
<g fill="none" stroke="#ddd"><path d="M56.500 572.500H69.500V585.500H56.500ZM56.500 575.500H69.500M58 579H62M58 582H62"/><circle cx="65" cy="581" r="3"/></g>
<g fill="none" stroke="#ddd"><circle cx="95" cy="572" r="1.500"/><path d="M88 573L95 575L102 573M95 575V579L91 586M95 579L97 583L103 574"/></g>
<text x="105" y="583" textLength="126" lengthAdjust="spacingAndGlyphs" style="font-size:12.500px;fill:#e6e6e6">Accessibility: Good to go</text>
<rect x="588" y="567" width="40" height="21" fill="#555"/>
<g fill="none" stroke="#eee"><rect x="601.500" y="571.500" width="12" height="12"/><path d="M601 575.500H614M601 579.500H614M605.500 571V584M609.500 571V584"/>
<rect x="641.500" y="571.500" width="13" height="12"/><rect x="644.500" y="574.500" width="7" height="6"/>
<path d="M681.500 583.500V571.500H694.500V583.500ZM681.500 577.500H688.500V571.500"/></g>
<path d="M714 577.500H722M727 577.500H827M832 577.500H840M836 573.500V581.500" stroke="#ddd"/>
<rect x="775" y="572" width="5" height="11" fill="#eee"/>
<text x="853" y="582" textLength="27" lengthAdjust="spacingAndGlyphs" style="font-size:12.500px;fill:#ddd">100%</text>
</svg>
</body></html>
